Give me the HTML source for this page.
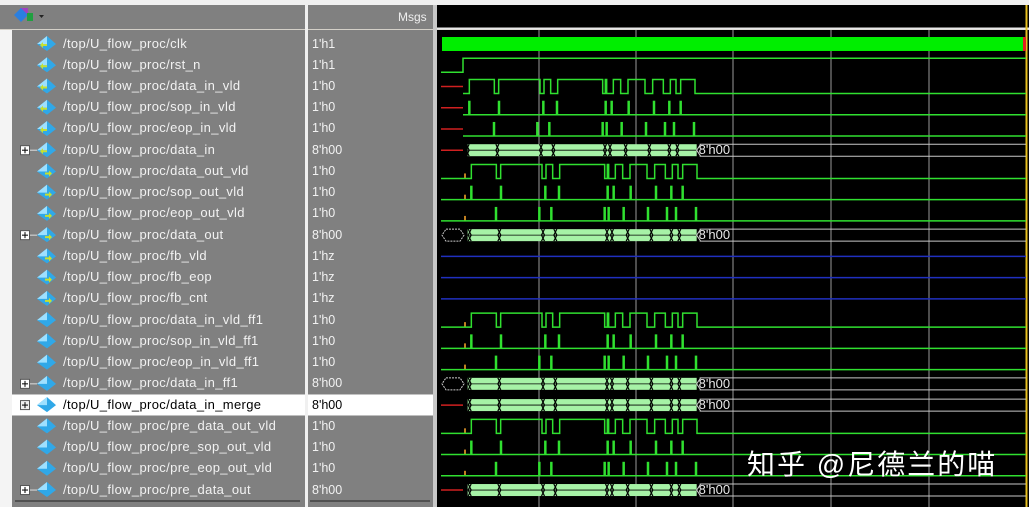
<!DOCTYPE html>
<html><head><meta charset="utf-8">
<style>
html,body{margin:0;padding:0;width:1029px;height:507px;overflow:hidden;background:#d4d0c8;font-family:"Liberation Sans",sans-serif;}
#root{position:absolute;left:0;top:0;width:1029px;height:507px;}
.t{position:absolute;font-size:13px;letter-spacing:0.35px;color:#f2f2f2;white-space:nowrap;line-height:14px;}
.v{position:absolute;font-size:12.5px;color:#f2f2f2;white-space:nowrap;line-height:14px;}
</style></head><body>
<div id="root">
<svg id="s" width="1029" height="507" style="position:absolute;left:0;top:0" xmlns="http://www.w3.org/2000/svg"></svg>
<div id="txt"></div>
<div style="position:absolute;left:747px;top:443px;font-size:28px;letter-spacing:2px;color:#fff;font-family:'Liberation Sans','Noto Sans CJK SC',sans-serif;white-space:nowrap;">知乎 @尼德兰的喵</div>
</div>
<script>
const S=document.getElementById('s');let h='';
function r(x,y,w,hh,f){h+=`<rect x="${x}" y="${y}" width="${w}" height="${hh}" fill="${f}"/>`;}
function l(x1,y1,x2,y2,c,w){h+=`<line x1="${x1}" y1="${y1}" x2="${x2}" y2="${y2}" stroke="${c}" stroke-width="${w||1}"/>`;}
function p(d,c,w,f){h+=`<path d="${d}" stroke="${c}" stroke-width="${w||1}" fill="${f||'none'}"/>`;}
r(0,0,1029,507,'#d4d0c8');
r(0,0,1029,5,'#f0f0f0');
r(0,5,307,24,'#808080');r(308,5,126,24,'#808080');
r(437,5,592,24,'#000');
l(437,28.5,1029,28.5,'#e8e8e8',2);
r(0,30,12,477,'#f4f4f4');
r(12,30,295,477,'#808080');
r(305,5,3,502,'#f0f0f0');
r(308,30,126,477,'#808080');
r(433,5,4,502,'#c8c8c8');
r(437,30,592,477,'#000');
h+=`<path d="M20 8 L28 8 L28 15 L20 15Z" fill="#a040c0"/><path d="M14 15 L21 8 L28 15 L21 22Z" fill="#2a7fe0"/><rect x="27" y="13" width="6" height="8" fill="#20a040"/><path d="M39 15 L44 15 L41.5 18Z" fill="#222"/>`;
[539,636,733,831,929].forEach(x=>l(x,30,x,507,'#9a9a9a',1));
l(1026.5,5,1026.5,507,'#e8c020',2);
const names=['clk','rst_n','data_in_vld','sop_in_vld','eop_in_vld','data_in','data_out_vld','sop_out_vld','eop_out_vld','data_out','fb_vld','fb_eop','fb_cnt','data_in_vld_ff1','sop_in_vld_ff1','eop_in_vld_ff1','data_in_ff1','data_in_merge','pre_data_out_vld','pre_sop_out_vld','pre_eop_out_vld','pre_data_out'];
const vals=["1'h1","1'h1","1'h0","1'h0","1'h0","8'h00","1'h0","1'h0","1'h0","8'h00","1'hz","1'hz","1'hz","1'h0","1'h0","1'h0","8'h00","8'h00","1'h0","1'h0","1'h0","8'h00"];
const bus=[5,9,16,17,21];
const X=z=>430+z/3;
const vld=[[118,193],[206,330],[342,362],[383,518],[526,530],[550,572],[594,645],[668,700],[721,738],[752,795]];
const sop=[118,207,340,381,527,545,596,672,718,752];
const eop=[192,322,358,518,530,575,648,705,732,792];
const btr=[113,202,333,370,525,540,587,658,718,742];
let t='';
names.forEach((n,i)=>{
 const c=44+21.24*i, top=c-10.6;
 if(i==17){r(12,top,293,21,'#fff');r(308,top,125,21,'#fff');}
 const col=i==17?'#000':'#f2f2f2';
 t+=`<div class="t" style="left:63px;top:${c-7.5}px;color:${col}">/top/U_flow_proc/${n}</div>`;
 t+=`<div class="v" style="left:312px;top:${c-7.5}px;color:${col}">${vals[i]}</div>`;
 const ix=47;
 h+=`<path d="M${ix-10} ${c} L${ix} ${c-8} L${ix+9} ${c} L${ix} ${c+7}Z" fill="#30a8e8"/><path d="M${ix-10} ${c} L${ix} ${c-8} L${ix} ${c}Z" fill="#9ee0ff"/>`;
 if(i<=5) h+=`<path d="M${ix-7} ${c+1} l3 -3 l0 2 l4 0 l0 2 l-4 0 l0 2Z" fill="#c8e030"/>`;
 else if(i>=6&&i<=12) h+=`<path d="M${ix+5} ${c+2} l-3 -3 l0 2 l-4 0 l0 2 l4 0 l0 2Z" fill="#c8e030"/>`;
 if(bus.includes(i)){r(20.5,c-4.5,9,9,i==17?'#eee':'#fff');h+=`<rect x="20.5" y="${c-4.5}" width="9" height="9" fill="none" stroke="#555"/>`;l(22,c,28,c,'#000');l(25,c-3,25,c+3,'#000');if(i!=17)l(30,c,37,c,'#ddd');}
 const hi=c-7, lo=c+7, G='#30e030';
 const off=(i>=6&&i<=9)||(i>=13)?2:0;
 const red=[2,3,4,5,17,21].includes(i);
 if(i==0){r(442,c-7,584,14,'#00ee00');r(1023,c-7,3,14,'#e02020');return;}
 if(i==1){p(`M441 ${lo} H463 V${hi} H1026`,G,1.5);return;}
 if(i>=10&&i<=12){l(441,c,1026,c,'#2030c0',1.5);return;}
 if(red) l(441,c,463,c,'#d02020',1.5); else if(!bus.includes(i)) {p(`M441 ${lo} H463`,G,1.5);l(465,lo-5,465,lo,'#c08020',2);}
 if(i==2||i==6||i==13||i==18){let d=`M463 ${lo}`;vld.forEach(([a,b])=>{d+=` H${X(a)+off} V${hi} H${X(b)+off} V${lo}`});d+=' H1026';p(d,G,1.5);}
 if([3,4,7,8,14,15,19,20].includes(i)){const arr=[3,7,14,19].includes(i)?sop:eop;l(463,lo,1026,lo,G,1.5);arr.forEach(a=>l(X(a)+off,hi,X(a)+off,lo,G,2.5));}
 if(bus.includes(i)){
  const bt=c-6,bb=c+6;
  if(!red){h+=`<path d="M446 ${bt} H460 L464 ${c} L460 ${bb} H446 L442 ${c}Z" fill="none" stroke="#ccc" stroke-dasharray="2,1"/>`;}
  r(X(113),bt,X(800)-X(113),12,'#a6f2a6');
  l(X(113),c,X(800),c,'#000',0.8);
  btr.forEach(a=>{const x=X(a)+off;h+=`<path d="M${x-1.5} ${bt} L${x+1.5} ${c} L${x-1.5} ${bb} M${x+1.5} ${bt} L${x-1.5} ${c} L${x+1.5} ${bb}" stroke="#000" stroke-width="1.2" fill="none"/>`;});
  h+=`<path d="M${X(800)+4} ${bt} L${X(800)} ${c} L${X(800)+4} ${bb}" stroke="#ccc" fill="none"/>`;
  l(X(800)+3,bt,1026,bt,'#c8c8c8',1);l(X(800)+3,bb,1026,bb,'#c8c8c8',1);
  t+=`<div class="v" style="left:${X(806)}px;top:${c-7}px;color:#e8e8e8;font-size:13px">8'h00</div>`;
 }
});
t+=`<div class="v" style="left:398px;top:10px;color:#eee;font-size:12px">Msgs</div>`;
l(15,501,300,501,'#222',1);l(310,501,430,501,'#222',1);
S.innerHTML=h;document.getElementById('txt').innerHTML=t;
</script>
</body></html>
